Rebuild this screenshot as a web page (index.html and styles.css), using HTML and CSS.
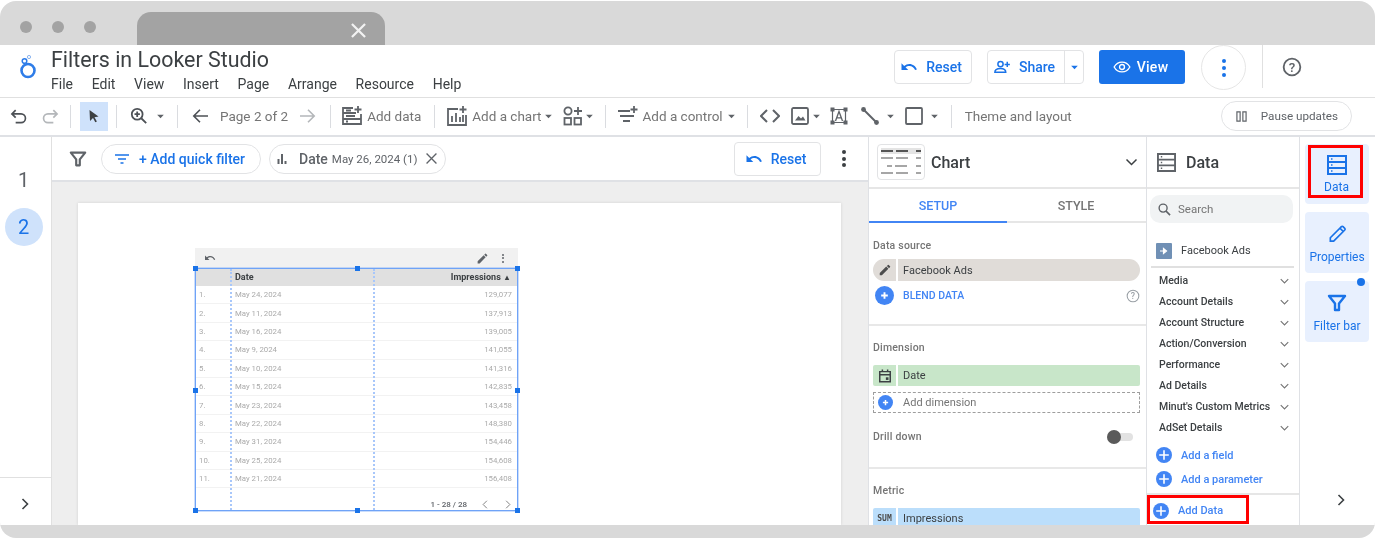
FILE: index.html
```html
<!DOCTYPE html>
<html lang="en">
<head>
<meta charset="utf-8">
<title>Filters in Looker Studio</title>
<link rel="stylesheet" href="styles.css">
</head>
<body>
<svg class="defs" width="0" height="0" aria-hidden="true">
  <defs>
    <symbol id="caret" viewBox="0 0 10 6"><path d="M1 1h8L5 5z" fill="currentColor"/></symbol>
    <symbol id="undo" viewBox="0 0 24 24"><path d="M8 5L3.5 9.5 8 14M4 9.5h10.5a5.2 5.2 0 0 1 0 10.5H8" fill="none" stroke="currentColor" stroke-width="2"/></symbol>
    <symbol id="reset" viewBox="0 0 24 24"><path d="M12.5 8c-2.6 0-5 1-6.9 2.6L2 7v9h9l-3.6-3.6c1.4-1.2 3.2-1.9 5.1-1.9 3.5 0 6.5 2.3 7.6 5.5l2.4-.8C21 11 17.100 8 12.500 8z" fill="currentColor"/></symbol>
    <symbol id="chev" viewBox="0 0 12 8"><path d="M1 1.500l5 5 5-5" fill="none" stroke="currentColor" stroke-width="1.500"/></symbol>
    <symbol id="plus" viewBox="0 0 20 20"><circle cx="10" cy="10" r="10" fill="#4285f4"/><path d="M10 4v12M4 10h12" stroke="#fff" stroke-width="2"/></symbol>
    <symbol id="plus-small" viewBox="0 0 20 20"><circle cx="10" cy="10" r="10" fill="#4285f4"/><path d="M10 6.500v7M6.500 10h7" stroke="#fff" stroke-width="2"/></symbol>
    <symbol id="pencil" viewBox="0 0 24 24"><path d="M3 17.300V21h3.700L17.800 9.900l-3.700-3.700zM20.700 7a1 1 0 0 0 0-1.400l-2.300-2.300a1 1 0 0 0-1.400 0l-1.800 1.800 3.700 3.700z" fill="currentColor"/></symbol>
    <symbol id="funnel" viewBox="0 0 20 20"><path d="M2 3h16l-6 7.500V17H8v-6.500z" fill="none" stroke="currentColor" stroke-width="2.400" stroke-linejoin="round"/></symbol>
    <symbol id="db" viewBox="0 0 20 20"><path d="M1 1h18v18H1zM1 7h18M1 13h18" fill="none" stroke="currentColor" stroke-width="2"/><path d="M4 4h1.500M4 10h1.500M4 16h1.500" stroke="currentColor" stroke-width="1.500"/></symbol>
  </defs>
</svg>
<div class="window">
  <div class="tabbar">
    <span class="dot"></span><span class="dot"></span><span class="dot"></span>
    <div class="tab">
      <svg class="tab-x" viewBox="0 0 16 16"><path d="M1 1l14 14M15 1L1 15" stroke="#f2f2f2" stroke-width="2.400"/></svg>
    </div>
  </div>

  <div class="app">
    <header class="header">
      <svg class="logo" viewBox="0 0 18 26">
        <circle cx="9" cy="16.500" r="6.500" fill="none" stroke="#2f7de8" stroke-width="2.600"/>
        <circle cx="5.500" cy="7" r="2.300" fill="none" stroke="#2f7de8" stroke-width="1.500"/>
        <circle cx="10" cy="3" r="1.600" fill="none" stroke="#8ab4f0" stroke-width="1"/>
      </svg>
      <div class="title-block">
        <div class="doc-title">Filters in Looker Studio</div>
        <nav class="menu">
          <span>File</span><span>Edit</span><span>View</span><span>Insert</span><span>Page</span><span>Arrange</span><span>Resource</span><span>Help</span>
        </nav>
      </div>
      <div class="actions">
        <button class="btn btn-reset"><svg class="ic18"><use href="#reset"/></svg>Reset</button>
        <div class="btn-share">
          <button class="share-main">
            <svg class="ic18" viewBox="0 0 24 24"><circle cx="10" cy="8" r="3.500" fill="none" stroke="currentColor" stroke-width="2"/><path d="M2.500 19c0-3.500 4-5 7.500-5s7 1.500 7 5z" fill="none" stroke="currentColor" stroke-width="2"/><path d="M19 5v7M15.500 8.500h7" stroke="currentColor" stroke-width="2"/></svg>
            Share
          </button>
          <span class="share-caret"><svg class="caret caret-blue"><use href="#caret"/></svg></span>
        </div>
        <button class="btn-view">
          <svg class="ic18" viewBox="0 0 24 24"><path d="M1.500 12C4 7.500 8 5.500 12 5.500s8 2 10.500 6.500C20 16.500 16 18.500 12 18.500S4 16.500 1.500 12z" fill="none" stroke="#fff" stroke-width="1.800"/><circle cx="12" cy="12" r="3.300" fill="none" stroke="#fff" stroke-width="1.800"/></svg>
          View
        </button>
        <div class="more-circle"><span class="kebab kebab-blue"><i></i><i></i><i></i></span></div>
        <span class="vline"></span>
        <svg class="help" viewBox="0 0 24 24"><circle cx="12" cy="12" r="10" fill="none" stroke="#5f6368" stroke-width="2.200"/><text x="12" y="17.500" text-anchor="middle" class="help-q">?</text></svg>
      </div>
    </header>

    <div class="toolbar">
      <div class="tool-group g-history">
        <svg class="ic20 c-dark"><use href="#undo"/></svg>
        <svg class="ic20 c-light flip"><use href="#undo"/></svg>
      </div>
      <span class="sep"></span>
      <div class="cursor-tile">
        <svg class="ic14" viewBox="0 0 14 14"><path d="M2.500 1l9 6.500-4 .7 2.400 4.300-1.600.8-2.300-4.300L3 12z" fill="#3c4043"/></svg>
      </div>
      <span class="sep s-cursor"></span>
      <div class="tool-group g-zoom">
        <svg class="ic18 c-dark" viewBox="0 0 20 20"><circle cx="8" cy="8" r="6" fill="none" stroke="currentColor" stroke-width="2"/><path d="M12.500 12.500L18 18M8 5v6M5 8h6" stroke="currentColor" stroke-width="2"/></svg>
        <svg class="caret"><use href="#caret"/></svg>
      </div>
      <span class="sep s-zoom"></span>
      <div class="tool-group g-page">
        <svg class="ic16 c-dark" viewBox="0 0 18 18"><path d="M9 2L2 9l7 7M2 9h16" fill="none" stroke="currentColor" stroke-width="1.800"/></svg>
        <span class="tool-text">Page 2 of 2</span>
        <svg class="ic16 c-light" viewBox="0 0 18 18"><path d="M9 2l7 7-7 7M16 9H0" fill="none" stroke="currentColor" stroke-width="1.800"/></svg>
      </div>
      <span class="sep s-page"></span>
      <div class="tool-group g-adddata">
        <svg class="ic20 c-mid" viewBox="0 0 20 20"><path d="M11 2H1v16h18V8M1 7h13M1 13h18M4 4.500h5M4 10h9M4 15.500h2" fill="none" stroke="currentColor" stroke-width="1.800"/><path d="M16 0v7M12.500 3.500h7" stroke="currentColor" stroke-width="1.800"/></svg>
        <span class="tool-text">Add data</span>
      </div>
      <span class="sep s-adddata"></span>
      <div class="tool-group g-chart">
        <svg class="ic20 c-mid" viewBox="0 0 20 20"><path d="M11 3H1v16h18V9" fill="none" stroke="currentColor" stroke-width="1.800"/><path d="M5 10v6M9 7v9M13 11v5M16 9v7" stroke="currentColor" stroke-width="1.800"/><path d="M16 0v7M12.500 3.500h7" stroke="currentColor" stroke-width="1.800"/></svg>
        <span class="tool-text">Add a chart</span>
        <svg class="caret"><use href="#caret"/></svg>
      </div>
      <div class="tool-group g-comp">
        <svg class="ic20 c-mid" viewBox="0 0 20 20"><circle cx="5" cy="5" r="3.600" fill="none" stroke="currentColor" stroke-width="1.800"/><path d="M15 1v8M11 5h8" stroke="currentColor" stroke-width="1.800"/><rect x="1.500" y="12" width="6.500" height="6.500" fill="none" stroke="currentColor" stroke-width="1.800"/><rect x="11.500" y="12" width="6.500" height="6.500" fill="none" stroke="currentColor" stroke-width="1.800"/></svg>
        <svg class="caret"><use href="#caret"/></svg>
      </div>
      <span class="sep s-comp"></span>
      <div class="tool-group g-control">
        <svg class="ic20 c-mid" viewBox="0 0 20 20"><path d="M0 5h12M2 10h14M5 15h7" stroke="currentColor" stroke-width="1.800"/><path d="M16 0v7M12.500 3.500h7" stroke="currentColor" stroke-width="1.800"/></svg>
        <span class="tool-text">Add a control</span>
        <svg class="caret"><use href="#caret"/></svg>
      </div>
      <span class="sep s-control"></span>
      <div class="tool-group g-insert">
        <svg class="ic20 c-mid" viewBox="0 0 20 20"><path d="M7 4l-6 6 6 6M13 4l6 6-6 6" fill="none" stroke="currentColor" stroke-width="2"/></svg>
        <svg class="ic18 c-mid gi-image" viewBox="0 0 18 18"><rect x="1" y="1" width="16" height="16" rx="1.500" fill="none" stroke="currentColor" stroke-width="1.800"/><path d="M4 13.500l3.500-4.500 2.500 2.500 2-2 2.500 4z" fill="currentColor"/></svg>
        <svg class="caret gi-caret"><use href="#caret"/></svg>
        <svg class="ic18 c-mid gi-text" viewBox="0 0 18 18"><path d="M2.500 2.500h13v13h-13z" fill="none" stroke="currentColor" stroke-width="1.200"/><rect x="0.500" y="0.500" width="4" height="4" fill="currentColor"/><rect x="13.500" y="0.500" width="4" height="4" fill="currentColor"/><rect x="0.500" y="13.500" width="4" height="4" fill="currentColor"/><rect x="13.500" y="13.500" width="4" height="4" fill="currentColor"/><path d="M5.500 14L9 4.500l3.500 9.500M6.800 10.800h4.400" fill="none" stroke="currentColor" stroke-width="1.300"/></svg>
        <svg class="ic18 c-mid gi-line" viewBox="0 0 18 18"><path d="M2.500 2.500l13 13" stroke="currentColor" stroke-width="2"/><circle cx="2.500" cy="2.500" r="2.400" fill="currentColor"/><circle cx="15.500" cy="15.500" r="2.400" fill="currentColor"/></svg>
        <svg class="caret gi-caret2"><use href="#caret"/></svg>
        <svg class="ic18 c-mid gi-rect" viewBox="0 0 18 18"><rect x="1" y="1" width="16" height="16" rx="1" fill="none" stroke="currentColor" stroke-width="1.800"/></svg>
        <svg class="caret gi-caret3"><use href="#caret"/></svg>
      </div>
      <span class="sep s-insert"></span>
      <span class="tool-text theme">Theme and layout</span>
      <div class="pause">
        <svg class="pause-ic" viewBox="0 0 12 12"><path d="M1 1h3.500v10H1zM7.500 1H11v10H7.500z" fill="none" stroke="#5f6368" stroke-width="1.300"/></svg>
        Pause updates
      </div>
    </div>

    <div class="workspace">
      <aside class="page-rail">
        <div class="page-num n1">1</div>
        <div class="page-num n2">2</div>
        <div class="rail-foot"><svg class="rail-chev" viewBox="0 0 8 12"><path d="M1.500 1l5 5-5 5" fill="none" stroke="#3c4043" stroke-width="1.600"/></svg></div>
      </aside>

      <section class="stage">
        <div class="filterbar">
          <svg class="fb-funnel"><use href="#funnel"/></svg>
          <div class="pill pill-add">
            <svg class="pill-ic" viewBox="0 0 14 10"><path d="M0 1h14M3 5h8M5.500 9h3" stroke="#1a73e8" stroke-width="1.500"/></svg>
            + Add quick filter
          </div>
          <div class="pill pill-date">
            <svg class="pill-bars" viewBox="0 0 10 10"><path d="M1.500 5v5M5 0v10M8.500 7v3" stroke="#5f6368" stroke-width="2"/></svg>
            <span class="pd-key">Date</span>
            <span class="pd-val">May 26, 2024 (1)</span>
            <svg class="pd-x" viewBox="0 0 10 10"><path d="M.5.500l9 9M9.500.500l-9 9" stroke="#5f6368" stroke-width="1.200"/></svg>
          </div>
          <button class="btn fb-reset"><svg class="ic18"><use href="#reset"/></svg>Reset</button>
          <span class="kebab kebab-dark fb-more"><i></i><i></i><i></i></span>
        </div>
        <div class="canvas">
          <div class="report-page">
            <div class="chart-wrap">
              <div class="chart-tools">
                <svg class="ct-reset"><use href="#reset"/></svg>
                <svg class="ct-pencil"><use href="#pencil"/></svg>
                <span class="kebab kebab-mini"><i></i><i></i><i></i></span>
              </div>
              <div class="chart-sel">
                <table class="dtable">
                  <thead>
                    <tr><th class="c-idx"></th><th class="c-date">Date</th><th class="c-imp">Impressions <span class="sort">▴</span></th></tr>
                  </thead>
                  <tbody>
                    <tr><td>1.</td><td>May 24, 2024</td><td class="num">129,077</td></tr>
                    <tr><td>2.</td><td>May 11, 2024</td><td class="num">137,913</td></tr>
                    <tr><td>3.</td><td>May 16, 2024</td><td class="num">139,005</td></tr>
                    <tr><td>4.</td><td>May 9, 2024</td><td class="num">141,055</td></tr>
                    <tr><td>5.</td><td>May 10, 2024</td><td class="num">141,316</td></tr>
                    <tr><td>6.</td><td>May 15, 2024</td><td class="num">142,835</td></tr>
                    <tr><td>7.</td><td>May 23, 2024</td><td class="num">143,458</td></tr>
                    <tr><td>8.</td><td>May 22, 2024</td><td class="num">148,380</td></tr>
                    <tr><td>9.</td><td>May 31, 2024</td><td class="num">154,446</td></tr>
                    <tr><td>10.</td><td>May 25, 2024</td><td class="num">154,608</td></tr>
                    <tr><td>11.</td><td>May 21, 2024</td><td class="num">156,408</td></tr>
                  </tbody>
                </table>
                <div class="pager">
                  <span>1 - 28 / 28</span>
                  <svg class="pg-chev" viewBox="0 0 8 12"><path d="M6.500 1l-5 5 5 5" fill="none" stroke="#757575" stroke-width="1.200"/></svg>
                  <svg class="pg-chev pg-next" viewBox="0 0 8 12"><path d="M1.500 1l5 5-5 5" fill="none" stroke="#757575" stroke-width="1.200"/></svg>
                </div>
                <span class="guide g1"></span><span class="guide g2"></span>
                <span class="h h-tl"></span><span class="h h-tm"></span><span class="h h-tr"></span>
                <span class="h h-ml"></span><span class="h h-mr"></span>
                <span class="h h-bl"></span><span class="h h-bm"></span><span class="h h-br"></span>
              </div>
            </div>
          </div>
        </div>
      </section>

      <section class="chart-panel">
        <div class="panel-head">
          <div class="thumb">
            <span class="tr tr-h"><b></b><b></b><b class="short"></b></span>
            <span class="tr"><b></b><b></b><b class="short"></b></span>
            <span class="tr"><b class="short"></b><b></b><b class="short"></b></span>
            <span class="tr"><b></b><b></b><b class="short"></b></span>
          </div>
          <span class="head-title">Chart</span>
          <svg class="head-chev"><use href="#chev"/></svg>
        </div>
        <div class="tabs">
          <div class="tabitem active">SETUP</div>
          <div class="tabitem">STYLE</div>
        </div>
        <div class="sec sec-source">
          <div class="sec-label">Data source</div>
          <div class="chip chip-source">
            <span class="chip-ic"><svg class="ic14b"><use href="#pencil"/></svg></span>
            <span class="chip-body">Facebook Ads</span>
          </div>
          <div class="blend">
            <svg class="blend-plus"><use href="#plus-small"/></svg>
            <span>BLEND DATA</span>
            <svg class="blend-help" viewBox="0 0 24 24"><circle cx="12" cy="12" r="10" fill="none" stroke="#9aa0a6" stroke-width="1.800"/><text x="12" y="17" text-anchor="middle" class="help-q2">?</text></svg>
          </div>
        </div>
        <div class="sec sec-dim">
          <div class="sec-label">Dimension</div>
          <div class="chip chip-dim">
            <span class="chip-ic"><svg class="ic14b" viewBox="0 0 16 16"><path d="M2 3h12v11.500H2zM2 6.500h12" fill="none" stroke="#3c4043" stroke-width="1.700"/><path d="M5 .500v3M11 .500v3" stroke="#3c4043" stroke-width="1.700"/><rect x="9" y="9.500" width="3" height="3" fill="#3c4043"/></svg></span>
            <span class="chip-body">Date</span>
          </div>
          <div class="add-dim">
            <svg class="dim-plus"><use href="#plus-small"/></svg>
            <span>Add dimension</span>
          </div>
          <div class="drill">
            <span class="sec-label">Drill down</span>
            <span class="toggle"><i></i></span>
          </div>
        </div>
        <div class="sec sec-metric">
          <div class="sec-label">Metric</div>
          <div class="chip chip-metric">
            <span class="chip-ic sum">SUM</span>
            <span class="chip-body">Impressions</span>
          </div>
        </div>
      </section>

      <section class="data-panel">
        <div class="panel-head data-head">
          <svg class="dh-ic"><use href="#db"/></svg>
          <span class="head-title">Data</span>
        </div>
        <div class="search">
          <svg class="search-ic" viewBox="0 0 14 14"><circle cx="5.500" cy="5.500" r="4.300" fill="none" stroke="#5f6368" stroke-width="1.500"/><path d="M8.700 8.700L13 13" stroke="#5f6368" stroke-width="1.700"/></svg>
          Search
        </div>
        <div class="source-row">
          <span class="src-badge"><svg viewBox="0 0 10 10" class="src-arrow"><path d="M1 5h5M4.500 2.500L7.500 5l-3 2.500z" stroke="#fff" fill="#fff" stroke-width="1.200"/></svg></span>
          Facebook Ads
        </div>
        <ul class="fields">
          <li>Media<svg class="f-chev"><use href="#chev"/></svg></li>
          <li>Account Details<svg class="f-chev"><use href="#chev"/></svg></li>
          <li>Account Structure<svg class="f-chev"><use href="#chev"/></svg></li>
          <li>Action/Conversion<svg class="f-chev"><use href="#chev"/></svg></li>
          <li>Performance<svg class="f-chev"><use href="#chev"/></svg></li>
          <li>Ad Details<svg class="f-chev"><use href="#chev"/></svg></li>
          <li>Minut's Custom Metrics<svg class="f-chev"><use href="#chev"/></svg></li>
          <li>AdSet Details<svg class="f-chev"><use href="#chev"/></svg></li>
        </ul>
        <div class="add-links">
          <div class="add-link"><svg class="al-plus"><use href="#plus"/></svg>Add a field</div>
          <div class="add-link"><svg class="al-plus"><use href="#plus"/></svg>Add a parameter</div>
        </div>
        <div class="add-data-row">
          <div class="add-data-box"><svg class="al-plus"><use href="#plus"/></svg>Add Data</div>
        </div>
      </section>

      <aside class="side-rail">
        <div class="tile tile-data">
          <div class="tile-mark">
            <svg class="tile-ic"><use href="#db"/></svg>
            <span>Data</span>
          </div>
        </div>
        <div class="tile">
          <svg class="tile-ic" viewBox="0 0 24 24"><path d="M4 16.500V20.500h4L19.500 9l-4-4zM15.500 5l1.800-1.800a1.400 1.400 0 0 1 2 0l2 2a1.400 1.400 0 0 1 0 2L19.500 9" fill="none" stroke="currentColor" stroke-width="2"/></svg>
          <span>Properties</span>
        </div>
        <div class="tile tile-filter">
          <span class="tile-dot"></span>
          <svg class="tile-ic"><use href="#funnel"/></svg>
          <span>Filter bar</span>
        </div>
        <svg class="side-chev" viewBox="0 0 8 12"><path d="M1.500 1l5 5-5 5" fill="none" stroke="#3c4043" stroke-width="1.600"/></svg>
      </aside>
    </div>
  </div>
</div>
</body>
</html>
```

FILE: styles.css
```css
* { box-sizing: border-box; }
html, body { margin: 0; padding: 0; background: #fff; }
body { width: 1376px; height: 539px; overflow: hidden; font-family: Roboto, "Liberation Sans", sans-serif; color: #3c4043; }
.defs { position: absolute; }
button { font: inherit; background: none; padding: 0; cursor: pointer; }
svg { display: block; flex: none; }

.window { width: 1375px; height: 537px; margin-top: 1px; background: #d9d9d9; border-radius: 16px; overflow: hidden; display: flex; flex-direction: column; filter: blur(0.4px); }

.tabbar { height: 44px; flex: none; display: flex; align-items: flex-start; padding: 20px 0 0 20px; gap: 20px; }
.dot { width: 12px; height: 12px; border-radius: 50%; background: #a3a3a3; }
.tab { width: 248px; height: 33px; margin: -9px 0 0 21px; background: #a3a3a3; border-radius: 14px 14px 0 0; display: flex; justify-content: flex-end; align-items: center; padding-right: 19px; }
.tab-x { width: 15px; height: 15px; margin-top: 3px; }

.app { height: 480px; flex: none; background: #fff; display: flex; flex-direction: column; }

/* header */
.header { flex: none; display: flex; align-items: flex-start; border-bottom: 1px solid #e0e0e0; height: 53px; }
.logo { width: 18px; height: 26px; margin: 9px 0 0 19px; }
.title-block { margin-left: 14px; }
.doc-title { font-size: 21.400px; line-height: 26px; margin-top: 2px; color: #3c4043; }
.menu { display: flex; gap: 18.700px; font-size: 14px; line-height: 18px; margin-top: 2px; color: #3c4043; }
.actions { margin-left: auto; display: flex; align-items: flex-start; color: #1a73e8; padding-right: 73px; }
.btn { display: flex; align-items: center; justify-content: center; gap: 8px; border: 1px solid #e2e3e5; border-radius: 4px; background: #fff; color: #1a73e8; font-size: 14px; font-weight: 500; }
.btn-reset { width: 78px; height: 34px; margin-top: 5px; padding-right: 4px; }
.btn-share { display: flex; width: 97px; height: 34px; margin: 5px 0 0 15px; border: 1px solid #e2e3e5; border-radius: 4px; }
.share-main { flex: 1; display: flex; align-items: center; justify-content: center; gap: 8px; border: 0; color: #1a73e8; font-size: 14px; font-weight: 500; border-right: 1px solid #e2e3e5; padding-right: 4px; }
.share-caret { width: 18px; display: flex; align-items: center; justify-content: center; }
.btn-view { width: 86px; height: 34px; margin: 5px 0 0 15px; display: flex; align-items: center; justify-content: center; gap: 6px; border: 0; border-radius: 3px; background: #1a73e8; color: #fff; font-size: 14px; font-weight: 500; letter-spacing: .3px; padding-right: 3px; }
.more-circle { width: 45px; height: 45px; margin: 0 0 0 16px; border: 1px solid #e6e6e6; border-radius: 50%; display: flex; align-items: center; justify-content: center; }
.kebab { display: flex; flex-direction: column; align-items: center; gap: 3px; }
.kebab i { width: 4px; height: 4px; border-radius: 50%; background: currentColor; display: block; }
.kebab-blue { color: #1a73e8; }
.kebab-dark { color: #3c4043; }
.vline { width: 1px; height: 43px; background: #e0e0e0; margin-left: 16px; }
.help { width: 20px; height: 20px; margin: 12px 0 0 19px; }
.help-q { font-size: 16px; font-family: Roboto, sans-serif; fill: #5f6368; font-weight: 500; }
.ic16 { width: 16px; height: 16px; }
.ic18 { width: 18px; height: 18px; }
.ic20 { width: 20px; height: 20px; }
.ic14 { width: 14px; height: 14px; }
.caret { width: 9px; height: 5px; color: #5f6368; }
.caret-blue { color: #1a73e8; }

/* toolbar */
.toolbar { height: 39px; flex: none; display: flex; align-items: center; border-bottom: 2px solid #dfe1e5; padding: 0 0 1px 9px; font-size: 13.500px; color: #757575; }
.tool-group { display: flex; align-items: center; }
.tool-text { color: #757575; white-space: nowrap; }
.c-dark { color: #4d5156; }
.c-light { color: #b4b7ba; }
.c-mid { color: #5f6368; }
.flip { transform: scaleX(-1); }
.sep { width: 1px; height: 23px; background: #dadce0; flex: none; }
.g-history { gap: 11px; margin-right: 10px; }
.cursor-tile { width: 28px; height: 29px; margin-left: 9px; background: #cfe2fb; display: flex; align-items: center; justify-content: center; }
.s-cursor { margin-left: 8px; }
.g-zoom { margin-left: 13px; gap: 8px; }
.s-zoom { margin-left: 12px; }
.g-page { margin-left: 14px; gap: 12px; }
.s-page { margin-left: 14px; }
.g-adddata { margin-left: 11px; gap: 5px; }
.s-adddata { margin-left: 13px; }
.g-chart { margin-left: 12px; gap: 5px; }
.g-chart .caret { margin-left: -3px; }
.g-comp { margin-left: 10px; gap: 2px; }
.s-comp { margin-left: 11px; }
.g-control { margin-left: 12px; gap: 5px; }
.g-control .caret { margin-left: -1px; }
.s-control { margin-left: 11px; }
.g-insert { margin-left: 12px; }
.gi-image { margin-left: 11px; }
.gi-caret { margin-left: 3px; }
.gi-text { margin-left: 9px; }
.gi-line { margin-left: 13px; }
.gi-caret2 { margin-left: 7px; }
.gi-rect { margin-left: 10px; }
.gi-caret3 { margin-left: 7px; }
.s-insert { margin-left: 12px; }
.theme { margin-left: 13px; }
.pause { margin-left: 149px; width: 131px; height: 30px; border: 1px solid #e2e3e5; border-radius: 15px; display: flex; align-items: center; padding-left: 14px; gap: 14px; font-size: 11.700px; color: #5f6368; white-space: nowrap; }
.pause-ic { width: 11px; height: 11px; }

/* workspace */
.workspace { flex: 1; min-height: 0; display: flex; }
.page-rail { width: 52px; flex: none; border-right: 1px solid #e0e0e0; display: flex; flex-direction: column; align-items: center; padding-right: 4px; }
.page-num { font-size: 20px; width: 38px; height: 38px; border-radius: 50%; display: flex; align-items: center; justify-content: center; color: #5f6368; flex: none; }
.n1 { margin-top: 24px; }
.n2 { margin-top: 9px; background: #cfe2fb; color: #1a73e8; }
.rail-foot { margin-top: auto; width: 51px; height: 48px; margin-right: -4px; border-top: 1px solid #e0e0e0; display: flex; align-items: center; justify-content: center; padding: 4px 2px 0 0; }
.rail-chev { width: 8px; height: 12px; }

.stage { width: 816px; flex: none; display: flex; flex-direction: column; min-width: 0; }
.filterbar { height: 45px; flex: none; display: flex; align-items: center; border-bottom: 2px solid #dfe1e5; padding-left: 17px; }
.fb-funnel { width: 18px; height: 18px; color: #5f6368; }
.pill { height: 30px; border: 1px solid #e2e3e5; border-radius: 15px; display: flex; align-items: center; white-space: nowrap; }
.pill-add { width: 160px; margin-left: 14px; padding-left: 13px; gap: 10px; color: #1a73e8; font-size: 14px; font-weight: 500; }
.pill-ic { width: 14px; height: 10px; }
.pill-date { width: 177px; margin-left: 8px; padding-left: 7px; color: #5f6368; }
.pill-bars { width: 10px; height: 10px; }
.pd-key { font-size: 14px; font-weight: 500; margin-left: 12px; }
.pd-val { font-size: 11.500px; margin-left: 4px; }
.pd-x { width: 11px; height: 11px; margin-left: 8px; }
.fb-reset { width: 87px; height: 34px; margin-left: auto; padding-right: 4px; }
.fb-more { margin: 0 22px 0 21px; gap: 2.500px; }

.canvas { flex: 1; min-height: 0; background: #eeeeee; padding: 21px 27px 0 26px; overflow: hidden; }
.report-page { height: 100%; background: #fff; box-shadow: 0 0 3px rgba(0,0,0,.12); padding: 45px 0 0 117px; }
.chart-wrap { width: 323px; }
.chart-tools { height: 20px; background: #f1f1f1; display: flex; align-items: center; padding: 0 14px 0 9px; }
.ct-reset { width: 12px; height: 12px; color: #5f6368; }
.ct-pencil { width: 13px; height: 13px; color: #5f6368; margin-left: auto; }
.kebab-mini { margin-left: 13px; gap: 1.500px; color: #5f6368; }
.kebab-mini i { width: 2px; height: 2px; }
.chart-sel { position: relative; height: 243px; border: 1px solid #6fa3f7; box-shadow: 0 0 0 1px rgba(138,180,248,.45); }
.dtable { width: 100%; border-collapse: collapse; table-layout: fixed; font-size: 7.800px; color: #aaaaaa; }
.dtable th { height: 16.500px; background: #e0e0e0; color: #3c4043; font-weight: 700; text-align: left; padding: 0 3px; font-size: 9px; }
.dtable td { height: 18.400px; padding: 0 3px; border-bottom: 1px solid #f2f2f2; }
.dtable td:last-child { padding-right: 5px; }
.c-idx { width: 36px; }
.c-date { width: 143px; }
.dtable .c-imp, .dtable .num { text-align: right; }
.dtable .c-imp { padding-right: 8px; }
.sort { font-size: 8px; margin-left: 2px; }
.pager { display: flex; justify-content: flex-end; align-items: center; gap: 11px; padding: 12px 6px 0 0; font-size: 8px; font-weight: 500; color: #5f6368; }
.pg-chev { width: 6px; height: 9px; margin-left: 4px; }
.pg-next { margin-left: 6px; }
.guide { position: absolute; top: 0; bottom: 0; border-left: 2px dotted #a8c7fa; }
.g1 { left: 34px; }
.g2 { left: 177px; }
.h { position: absolute; width: 5px; height: 5px; background: #1a73e8; }
.h-tl { left: -3px; top: -3px; }
.h-tm { left: 159px; top: -3px; }
.h-tr { right: -3px; top: -3px; }
.h-ml { left: -3px; top: 119px; }
.h-mr { right: -3px; top: 119px; }
.h-bl { left: -3px; bottom: -3px; }
.h-bm { left: 159px; bottom: -3px; }
.h-br { right: -3px; bottom: -3px; }

/* chart panel */
.chart-panel { width: 279px; flex: none; border-left: 1px solid #dfe1e5; border-right: 1px solid #dfe1e5; display: flex; flex-direction: column; overflow: hidden; }
.panel-head { height: 52px; flex: none; display: flex; align-items: center; border-bottom: 2px solid #e6e6e6; padding-left: 8px; }
.thumb { width: 48px; height: 36px; border: 1px solid #e2e3e5; border-radius: 4px; padding: 3px 3px; display: flex; flex-direction: column; gap: 2px; }
.tr { display: flex; gap: 3px; height: 6px; align-items: center; }
.tr-h { background: #e4e4e4; }
.tr b { height: 2px; width: 12px; background: #a6a6a6; }
.tr b.short { width: 5px; margin-left: auto; }
.tr-h b { background: #555; }
.head-title { font-size: 16px; font-weight: 500; margin-left: 6px; color: #3c4043; }
.head-chev { width: 13px; height: 8px; margin-left: auto; margin-right: 8px; color: #3c4043; }
.tabs { height: 34px; flex: none; display: flex; border-bottom: 2px solid #e6e6e6; }
.tabitem { width: 138px; text-align: center; font-size: 12.500px; font-weight: 500; color: #757575; line-height: 34px; margin-bottom: -2px; height: 34px; }
.tabitem.active { color: #4285f4; border-bottom: 2px solid #4285f4; }
.sec { padding: 0 6px 0 4px; border-bottom: 2px solid #e8e8e8; flex: none; }
.sec-label { font-size: 10.500px; font-weight: 500; color: #757575; letter-spacing: .2px; }
.sec-source { height: 103px; padding-top: 16px; }
.chip { display: flex; height: 21px; font-size: 11px; color: #3c4043; }
.chip-ic { width: 25px; display: flex; align-items: center; justify-content: center; border-right: 2px solid #fff; flex: none; }
.chip-body { flex: 1; display: flex; align-items: center; padding-left: 5px; }
.ic14b { width: 14px; height: 14px; color: #4d4d4d; }
.chip-source { margin-top: 7px; background: #e0dcd8; border-radius: 11px; height: 22px; }
.blend { display: flex; align-items: center; font-size: 10.500px; font-weight: 500; color: #4285f4; margin-top: 5px; }
.blend-plus { width: 19px; height: 19px; margin: 0 9px 0 2px; }
.blend-help { width: 14px; height: 14px; margin-left: auto; }
.help-q2 { font-size: 15px; fill: #9aa0a6; font-family: Roboto, sans-serif; }
.sec-dim { height: 143px; padding-top: 15px; }
.chip-dim { margin-top: 11px; background: #c8e6c9; border-radius: 2px; }
.add-dim { display: flex; align-items: center; height: 21px; margin-top: 6px; border: 1px dashed #9e9e9e; font-size: 11px; color: #757575; }
.dim-plus { width: 15px; height: 15px; margin: 0 10px 0 4px; }
.drill { display: flex; align-items: center; justify-content: space-between; margin-top: 17px; padding-right: 7px; }
.toggle { width: 26px; height: 8px; background: #e2e2e2; border-radius: 4px; display: flex; align-items: center; }
.toggle i { width: 14px; height: 14px; border-radius: 50%; background: #5a5a5a; display: block; }
.sec-metric { border-bottom: 0; padding-top: 15px; }
.chip-metric { margin-top: 11px; background: #bbdefb; border-radius: 2px; height: 24px; }
.sum { font-size: 8px; font-weight: 700; font-family: "DejaVu Sans Mono", monospace; color: #4d4d4d; padding-bottom: 3px; }
.chip-metric .chip-body { padding-bottom: 3px; }

/* data panel */
.data-panel { width: 152px; flex: none; display: flex; flex-direction: column; overflow: hidden; }
.data-head { padding-left: 10px; }
.dh-ic { width: 19px; height: 19px; color: #5f6368; }
.data-head .head-title { margin-left: 10px; }
.search { width: 143px; height: 28px; margin: 6px 0 0 3px; background: #f1f3f4; border-radius: 10px; display: flex; align-items: center; padding-left: 8px; gap: 7px; font-size: 11.500px; color: #757575; flex: none; }
.search-ic { width: 13px; height: 13px; }
.source-row { flex: none; margin: 0 5px 0 4px; display: flex; align-items: center; gap: 9px; font-size: 11px; color: #3c4043; border-bottom: 2px solid #e0e0e0; padding: 15px 0 3px 5px; height: 45px; }
.src-badge { width: 16px; height: 16px; background: #7090b5; display: flex; align-items: center; justify-content: center; border-radius: 1px; }
.src-arrow { width: 10px; height: 10px; }
.fields { list-style: none; margin: 2px 0 0; padding: 0 10px 0 12px; flex: none; }
.fields li { height: 21px; display: flex; align-items: center; justify-content: space-between; font-size: 10.500px; font-weight: 500; color: #3c4043; white-space: nowrap; }
.f-chev { width: 9px; height: 6px; color: #757575; }
.add-links { flex: none; padding: 9px 0 0 9px; display: flex; flex-direction: column; gap: 8px; height: 55px; }
.add-link { display: flex; align-items: center; gap: 9px; font-size: 11px; font-weight: 500; color: #4285f4; height: 16px; }
.al-plus { width: 16px; height: 16px; }
.add-data-row { flex: none; border-top: 2px solid #e6e6e6; }
.add-data-box { width: 102px; height: 29px; border: 3px solid #f00; display: flex; align-items: center; gap: 9px; padding: 2px 0 0 3px; font-size: 11px; font-weight: 500; color: #4285f4; }

/* side rail */
.side-rail { flex: 1; min-width: 0; border-left: 1px solid #dfe1e5; padding: 7px 6px 0 5px; display: flex; flex-direction: column; gap: 8px; }
.tile { position: relative; height: 61px; background: #e8f0fe; border-radius: 4px; color: #1a73e8; display: flex; flex-direction: column; align-items: center; justify-content: center; gap: 6px; padding-top: 3px; font-size: 12px; }
.tile-ic { width: 20px; height: 20px; }
.tile-data { height: 60px; padding: 1px 6px 6px 3px; justify-content: flex-start; }
.tile-mark { width: 55px; height: 53px; border: 3px solid #f00; display: flex; flex-direction: column; align-items: center; justify-content: flex-start; padding: 7px 0 0 2px; gap: 5px; }
.tile-dot { position: absolute; top: -3px; right: 4px; width: 8px; height: 8px; border-radius: 50%; background: #1a73e8; }
.side-chev { width: 8px; height: 12px; margin: 144px 0 0 32px; }
```
